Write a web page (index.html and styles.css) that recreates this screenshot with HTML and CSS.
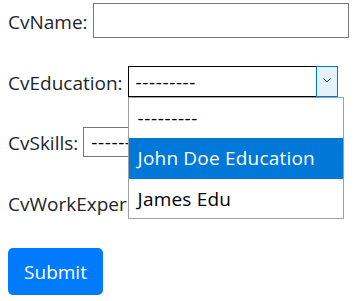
FILE: index.html
```html
<!DOCTYPE html>
<html>
<head>
<meta charset="utf-8">
<link rel="stylesheet" href="styles.css">
</head>
<body>
<form class="form">
  <div class="row row-name">
    <label class="label">CvName:</label>
    <div class="text-input"></div>
  </div>
  <div class="row row-edu">
    <label class="label">CvEducation:</label>
    <div class="select select-open">
      <span class="select-value">---------</span>
      <span class="select-btn">
        <svg width="8" height="5" viewBox="0 0 8 5"><path d="M0.5 0.5 L4 4 L7.5 0.5" fill="none" stroke="#3c3c3c" stroke-width="1"/></svg>
      </span>
      <div class="dropdown">
        <div class="option">---------</div>
        <div class="option option-active">John Doe Education</div>
        <div class="option">James Edu</div>
      </div>
    </div>
  </div>
  <div class="row row-skills">
    <label class="label">CvSkills:</label>
    <div class="select"><span class="select-value">---------</span></div>
  </div>
  <div class="row row-work">
    <label class="label">CvWorkExperience:</label>
    <div class="select select-small"></div>
  </div>
  <button type="button" class="submit">Submit</button>
</form>
</body>
</html>
```

FILE: styles.css
```css
html, body {
  margin: 0;
  padding: 0;
  background: #fff;
}
body {
  font-family: "Open Sans", "Noto Sans", sans-serif;
  font-size: 19px;
  color: #212529;
  overflow: hidden;
  width: 357px;
  height: 301px;
}
.form {
  display: flex;
  flex-direction: column;
  align-items: flex-start;
  padding: 3px 0 0 8px;
}
.row {
  display: flex;
  align-items: center;
  gap: 5px;
  white-space: nowrap;
}
.label {
  line-height: 24px;
  padding-top: 2px;
}
.row-name { height: 35px; }
.row-edu { height: 31px; margin-top: 28px; }
.row-skills { height: 30px; margin-top: 30px; }
.row-work { height: 30px; margin-top: 31px; }
.text-input {
  box-sizing: border-box;
  width: 256px;
  height: 35px;
  border: 1px solid #767676;
  background: #fff;
}
.select {
  position: relative;
  box-sizing: border-box;
  width: 210px;
  height: 30px;
  border: 1px solid #767676;
  background: #fff;
  display: flex;
  align-items: center;
  color: #000;
}
.select-open {
  height: 31px;
  border-color: #000;
}
.select-small { width: 150px; }
.select-value {
  padding-left: 7px;
  flex: 1;
  letter-spacing: 0.6px;
}
.select-btn {
  box-sizing: border-box;
  width: 22px;
  height: 31px;
  margin: -1px -1px -1px 0;
  border: 1px solid #0078d7;
  background: #e5f1fb;
  display: flex;
  align-items: center;
  justify-content: center;
  padding-bottom: 2px;
}
.dropdown {
  position: absolute;
  left: -1px;
  top: 30px;
  box-sizing: border-box;
  width: 216px;
  height: 122px;
  border: 1px solid #a0a0a0;
  background: #fff;
  z-index: 5;
  display: flex;
  flex-direction: column;
}
.option {
  height: 40px;
  line-height: 40px;
  padding-left: 9px;
  color: #000;
  letter-spacing: 0.2px;
}
.option:first-child { letter-spacing: 0.6px; }
.option-active {
  background: #0078d7;
  color: #fff;
  height: 41px;
  line-height: 41px;
}
.submit {
  margin-top: 30px;
  box-sizing: border-box;
  width: 95px;
  height: 47px;
  border: none;
  border-radius: 5px;
  background: #007bff;
  color: #fff;
  font-family: inherit;
  font-size: 19px;
  padding: 0;
}
```
